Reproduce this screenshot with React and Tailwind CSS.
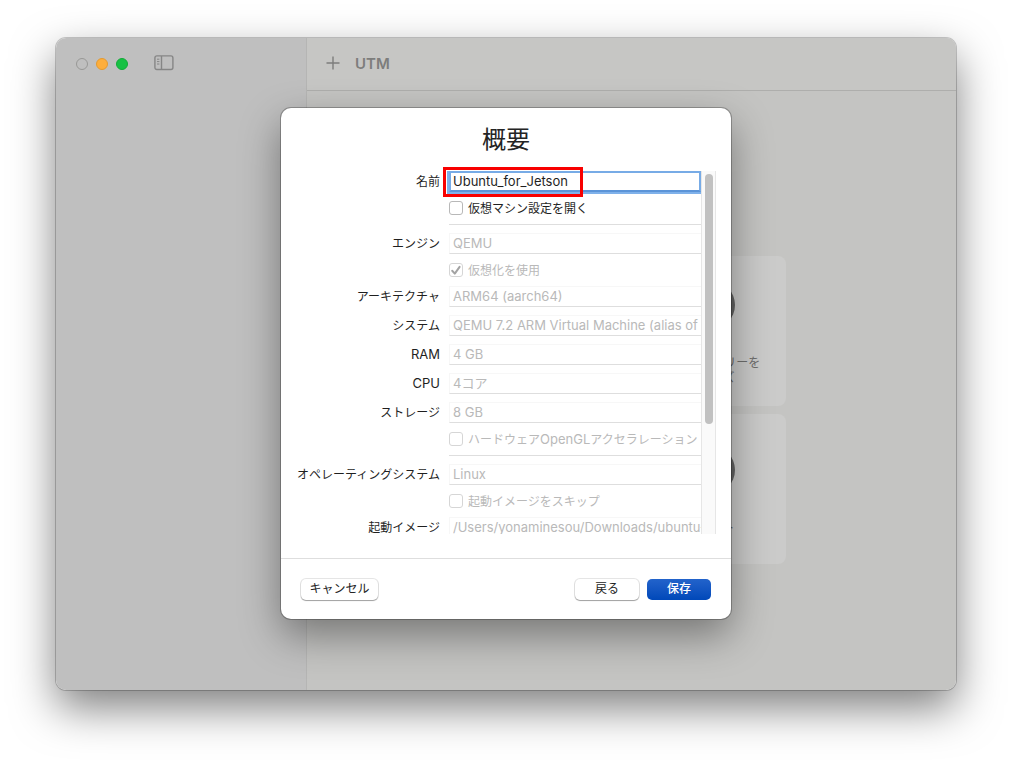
import React, { useState } from 'react'

const MACHINE_FIELDS = [
  { id: 'arch', label: 'アーキテクチャ', value: 'ARM64 (aarch64)' },
  { id: 'system', label: 'システム', value: 'QEMU 7.2 ARM Virtual Machine (alias of virt-7.2)' },
  { id: 'ram', label: 'RAM', value: '4 GB', latin: true },
  { id: 'cpu', label: 'CPU', value: '4コア', latin: true },
  { id: 'storage', label: 'ストレージ', value: '8 GB' },
]

function Label({ htmlFor, latin, children }) {
  return (
    <label
      htmlFor={htmlFor}
      className={`text-right whitespace-nowrap text-[#1f1f1f] ${latin ? 'text-[13px] leading-[21px]' : 'text-xs leading-[22px]'}`}
    >
      {children}
    </label>
  )
}

function ReadOnlyField({ id, label, value, latin }) {
  return (
    <div className="col-span-2 grid h-[21px] grid-cols-subgrid">
      <Label htmlFor={id} latin={latin}>
        {label}
      </Label>
      <input
        id={id}
        disabled
        value={value}
        className="h-[21px] w-full min-w-0 border border-r-0 border-[#f7f7f7] border-b-[#dedede] bg-white pb-[2px] pl-[3px] text-[13px] text-[#b9b9b9]"
      />
    </div>
  )
}

function CheckRow({ id, checked, disabled, onChange, children }) {
  return (
    <div className="col-start-2 flex h-4 items-center gap-[5px]">
      <span className="relative flex shrink-0">
        <input
          id={id}
          type="checkbox"
          checked={checked}
          disabled={disabled}
          onChange={onChange}
          className="peer size-[14px] appearance-none rounded-[3px] border border-[#b8b8b8] bg-white disabled:border-[#d6d6d6]"
        />
        <svg
          viewBox="0 0 14 14"
          className="pointer-events-none absolute inset-0 hidden size-[14px] text-[#a3a3a3] peer-checked:block"
          fill="none"
          stroke="currentColor"
          strokeWidth="2"
          strokeLinecap="round"
          strokeLinejoin="round"
        >
          <path d="M3.2 7.8 L5.8 10.6 L10.6 3.8" />
        </svg>
      </span>
      <label
        htmlFor={id}
        className={`pt-[2px] text-xs leading-4 whitespace-nowrap ${disabled ? 'text-[#b9b9b9]' : 'text-[#1f1f1f]'}`}
      >
        {children}
      </label>
    </div>
  )
}

function Divider() {
  return <hr className="col-start-2 h-px border-0 bg-[#dedede]" />
}

function WelcomeCard({ children }) {
  return (
    <div className="col-start-2 flex h-[150px] flex-col items-center justify-center gap-[26px] rounded-lg bg-[#cbcbca] pt-1 text-center text-xs leading-[15px] text-[#6e6e6d]">
      <span className="size-12 shrink-0 rounded-full bg-[#626262]" />
      <span>{children}</span>
    </div>
  )
}

function SummaryDialog() {
  const [name, setName] = useState('Ubuntu_for_Jetson')
  const [openSettings, setOpenSettings] = useState(false)

  return (
    <div
      role="dialog"
      aria-labelledby="summary-title"
      className="relative w-[450px] rounded-[10px] bg-white shadow-[0_0_0_1px_rgba(0,0,0,0.25),0_16px_40px_rgba(0,0,0,0.4)]"
    >
      <h1 id="summary-title" className="pt-4 pb-[15px] text-center text-2xl leading-8 text-[#242424]">
        概要
      </h1>

      <div className="flex h-[363px] overflow-hidden px-[15px]">
        <div className="grid min-w-0 flex-1 grid-cols-[144px_minmax(0,1fr)] content-start gap-x-[9px] gap-y-2">
          <div className="col-span-2 grid h-[21px] grid-cols-subgrid">
            <Label htmlFor="name">名前</Label>
            <input
              id="name"
              value={name}
              onChange={(e) => setName(e.target.value)}
              className="h-[21px] w-full min-w-0 border-2 border-[#77abe6] border-b-[#5b94d8] bg-white pb-[2px] pl-[2px] text-[13px] text-[#1f1f1f] ring-2 ring-[#7fb1ea] outline-none"
            />
          </div>
          <CheckRow id="open-settings" checked={openSettings} onChange={(e) => setOpenSettings(e.target.checked)}>
            仮想マシン設定を開く
          </CheckRow>
          <Divider />

          <ReadOnlyField id="engine" label="エンジン" value="QEMU" />
          <CheckRow id="virtualization" checked disabled>
            仮想化を使用
          </CheckRow>
          {MACHINE_FIELDS.map((field) => (
            <ReadOnlyField key={field.id} {...field} />
          ))}
          <CheckRow id="opengl" checked={false} disabled>
            ハードウェア<span className="text-[13px] leading-none">OpenGL</span>アクセラレーション
          </CheckRow>
          <Divider />

          <ReadOnlyField id="os" label="オペレーティングシステム" value="Linux" />
          <CheckRow id="skip-boot" checked={false} disabled>
            起動イメージをスキップ
          </CheckRow>
          <ReadOnlyField id="boot-image" label="起動イメージ" value="/Users/yonaminesou/Downloads/ubuntu-" />
        </div>

        {/* Scrollbar */}
        <div className="z-10 flex w-[15px] shrink-0 justify-center border-x border-[#e6e6e6] bg-[#fafafa] pt-[3px]">
          <div className="h-[250px] w-2 rounded-full bg-[#c1c1c1]" />
        </div>
      </div>

      <footer className="mt-6 flex items-center gap-2 border-t border-[#dedede] px-5 pt-5 pb-[19px]">
        <button className="h-[21px] w-[77px] rounded-[5px] bg-white pb-[2px] text-xs text-[#242424] shadow-[0_0_0_1px_rgba(0,0,0,0.1),0_1px_1px_rgba(0,0,0,0.3)]">
          キャンセル
        </button>
        <button className="ml-auto h-[21px] w-16 rounded-[5px] bg-white pb-[2px] text-xs text-[#242424] shadow-[0_0_0_1px_rgba(0,0,0,0.1),0_1px_1px_rgba(0,0,0,0.3)]">
          戻る
        </button>
        <button className="h-[21px] w-16 rounded-[5px] bg-linear-to-b from-[#2263cb] to-[#0048b9] pb-[2px] text-xs font-medium text-white">
          保存
        </button>
      </footer>

      {/* Highlight around the machine name */}
      <div className="pointer-events-none absolute top-[59px] left-[162px] z-20 h-[30px] w-[140px] border-3 border-[#f80000]" />
    </div>
  )
}

export default function App() {
  return (
    <div className="flex min-h-screen overflow-hidden bg-white px-14 pt-[38px] pb-[74px] font-['Inter','Noto_Sans_CJK_JP',sans-serif]">
      <div className="relative flex flex-1 rounded-[10px] shadow-[0_0_0_1px_rgba(0,0,0,0.2),0_18px_44px_rgba(0,0,0,0.5)]">
        <aside className="w-[251px] shrink-0 rounded-l-[10px] border-r border-[#b5b5b4] bg-[#bfbfbf]">
          <div className="flex h-[52px] items-center gap-2 pl-5">
            <button aria-label="Close" className="size-3 rounded-full border border-[#989896]" />
            <button aria-label="Minimize" className="size-3 rounded-full border border-[#e59a2f] bg-[#fdae3c]" />
            <button aria-label="Zoom" className="size-3 rounded-full border border-[#12ab38] bg-[#17c144]" />
            <button aria-label="Toggle sidebar" className="ml-[18px] pb-[2px] text-[#868686]">
              <svg width="20" height="16" viewBox="0 0 20 16" fill="none" stroke="currentColor" strokeWidth="1.4">
                <rect x="0.9" y="0.9" width="18" height="13.6" rx="2" />
                <path d="M7.5 1v13.4" />
                <path d="M3 4.2h2.4M3 6.6h2.4M3 9h2.4" strokeWidth="1" />
              </svg>
            </button>
          </div>
        </aside>

        <main className="flex min-w-0 flex-1 flex-col overflow-hidden rounded-r-[10px] bg-[#c4c4c2]">
          <header className="flex h-[53px] shrink-0 items-center gap-[15px] border-b border-[#aeaeac] bg-[#c6c6c4] pl-[19px]">
            <button aria-label="New" className="pb-[2px] text-[#7d7d7c]">
              <svg width="14" height="14" viewBox="0 0 14 14" fill="none" stroke="currentColor" strokeWidth="1.4">
                <path d="M7 0.5v13M0.5 7h13" />
              </svg>
            </button>
            <span className="text-[15px] font-semibold text-[#7d7d7c]">UTM</span>
          </header>
          <div className="flex flex-1 items-center justify-center pt-[38px]">
            <div className="grid grid-cols-[150px_150px] gap-2">
              <WelcomeCard>
                UTMギャラリーを
                <br />
                ブラウズ
              </WelcomeCard>
              <WelcomeCard>サポート</WelcomeCard>
            </div>
          </div>
        </main>

        <div className="absolute inset-0 flex items-start justify-center overflow-hidden rounded-[10px] pt-[70px]">
          <SummaryDialog />
        </div>
      </div>
    </div>
  )
}
